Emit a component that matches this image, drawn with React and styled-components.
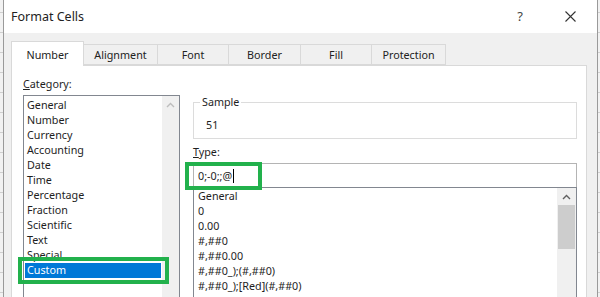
import React from 'react';
import styled, { createGlobalStyle } from 'styled-components';

const GlobalStyle = createGlobalStyle`
  html, body {
    margin: 0;
    padding: 0;
  }
  body {
    font-family: "Noto Sans", "Open Sans", sans-serif;
    color: #1e1e1e;
  }
`;

const Sheet = styled.div`
  width: 600px;
  height: 297px;
  overflow: hidden;
  display: flex;
  background-color: #f2f2f2;
  background-image: repeating-linear-gradient(
    to bottom,
    transparent 0,
    transparent 12px,
    #cfcfcf 12px,
    #cfcfcf 13px,
    transparent 13px,
    transparent 20px
  );
`;

const Dialog = styled.div`
  margin-left: 3px;
  width: 595px;
  height: 360px;
  flex: none;
  box-sizing: border-box;
  border-left: 1px solid #9a9a9a;
  border-right: 1px solid #9a9a9a;
  display: flex;
  flex-direction: column;
  background: #f0f0f0;
`;

const TitleBar = styled.div`
  height: 33px;
  flex: none;
  background: #fff;
  display: flex;
  align-items: center;
  padding: 0 21px 0 7px;
`;

const Title = styled.div`
  font-size: 12.5px;
  color: #222;
`;

const Controls = styled.div`
  margin-left: auto;
  display: flex;
  align-items: center;
  gap: 42px;
`;

const Help = styled.span`
  font-size: 13px;
  color: #444;
  line-height: 1;
`;

const Body = styled.div`
  flex: 1;
  display: flex;
  flex-direction: column;
  padding: 8px 10px 0 7px;
`;

const TabRow = styled.div`
  display: flex;
  align-items: flex-end;
  height: 24px;
  flex: none;
`;

const Tab = styled.div`
  position: relative;
  box-sizing: border-box;
  width: ${p => p.$w}px;
  height: ${p => (p.$active ? 25 : 21)}px;
  margin-right: -1px;
  margin-bottom: ${p => (p.$active ? -1 : 0)}px;
  padding-top: ${p => (p.$active ? 3 : 0)}px;
  border: 1px solid #d9d9d9;
  border-bottom: ${p => (p.$active ? 'none' : '1px solid #d9d9d9')};
  background: ${p => (p.$active ? '#fff' : '#f0f0f0')};
  z-index: ${p => (p.$active ? 2 : 1)};
  font-size: 10.75px;
  line-height: 20px;
  text-align: center;
  color: #222;
`;

const Panel = styled.div`
  flex: 1;
  display: flex;
  gap: 13px;
  background: #fff;
  border: 1px solid #d9d9d9;
  padding: 11px 9px 0 11px;
`;

const LeftCol = styled.div`
  width: 157px;
  flex: none;
  display: flex;
  flex-direction: column;
`;

const RightCol = styled.div`
  flex: 1;
  display: flex;
  flex-direction: column;
  padding-top: 18px;
`;

const Label = styled.div`
  font-size: 10.75px;
  line-height: 15px;
  height: 15px;
  margin: ${p => p.$mt || 0}px 0 3px;
`;

const ListBox = styled.div`
  display: flex;
  box-sizing: border-box;
  height: ${p => p.$h}px;
  border: 1px solid #828790;
  background: #fff;
`;

const Items = styled.div`
  flex: 1;
  padding: ${p => p.$pt}px 1px 0 1px;
`;

const Item = styled.div`
  position: relative;
  font-size: 10.75px;
  line-height: 15px;
  height: 15px;
  padding-left: ${p => p.$pl}px;
  white-space: nowrap;
  background: ${p => (p.$selected ? '#0078d7' : 'transparent')};
  color: ${p => (p.$selected ? '#fff' : '#1e1e1e')};
`;

const Mark = styled.div`
  position: absolute;
  box-sizing: border-box;
  border: 4px solid #22b14c;
  left: ${p => p.$l}px;
  top: ${p => p.$t}px;
  width: ${p => p.$w}px;
  height: ${p => p.$h}px;
  pointer-events: none;
  z-index: 3;
`;

const ScrollBar = styled.div`
  width: ${p => p.$w}px;
  flex: none;
  background: #f0f0f0;
  display: flex;
  flex-direction: column;
  align-items: center;
`;

const ArrowCell = styled.div`
  height: 17px;
  width: 100%;
  display: flex;
  align-items: center;
  justify-content: center;
`;

const Thumb = styled.div`
  width: calc(100% - 2px);
  height: 44px;
  background: #cdcdcd;
`;

const Group = styled.fieldset`
  margin: 0;
  min-width: 0;
  border: 1px solid #dcdcdc;
  padding: 0 0 5px 6px;
`;

const Legend = styled.legend`
  padding: 0 2px;
  font-size: 10.75px;
  line-height: 15px;
`;

const SampleValue = styled.div`
  margin-top: 8px;
  padding-left: 6px;
  font-size: 10.75px;
  line-height: 15px;
`;

const TypeInput = styled.div`
  position: relative;
  box-sizing: border-box;
  height: 24px;
  border: 1px solid #b4b4b4;
  border-bottom: none;
  padding-left: 4px;
  font-size: 10.75px;
  line-height: 22px;
  display: flex;
  align-items: center;
`;

const Caret = styled.span`
  display: inline-block;
  width: 1px;
  height: 14px;
  margin-left: 1px;
  background: #000;
`;

function Chevron({ color }) {
  return (
    <svg width="9" height="6" viewBox="0 0 9 6">
      <path d="M1 5 L4.5 1.5 L8 5" fill="none" stroke={color} strokeWidth="1.4" />
    </svg>
  );
}

const categories = [
  'General', 'Number', 'Currency', 'Accounting', 'Date', 'Time',
  'Percentage', 'Fraction', 'Scientific', 'Text', 'Special', 'Custom',
];

const formats = [
  'General', '0', '0.00', '#,##0', '#,##0.00',
  '#,##0_);(#,##0)', '#,##0_);[Red](#,##0)',
];

const tabs = [
  { name: 'Number', w: 73 },
  { name: 'Alignment', w: 75 },
  { name: 'Font', w: 72 },
  { name: 'Border', w: 73 },
  { name: 'Fill', w: 72 },
  { name: 'Protection', w: 75 },
];

export default function App() {
  return (
    <>
      <GlobalStyle />
      <Sheet>
        <Dialog>
          <TitleBar>
            <Title>Format Cells</Title>
            <Controls>
              <Help>?</Help>
              <svg width="11" height="11" viewBox="0 0 11 11">
                <path d="M0.5 0.5 L10.5 10.5 M10.5 0.5 L0.5 10.5" stroke="#333" strokeWidth="1.1" />
              </svg>
            </Controls>
          </TitleBar>
          <Body>
            <TabRow>
              {tabs.map((t, i) => (
                <Tab key={t.name} $w={t.w} $active={i === 0}>{t.name}</Tab>
              ))}
            </TabRow>
            <Panel>
              <LeftCol>
                <Label><u>C</u>ategory:</Label>
                <ListBox $h={220}>
                  <Items $pt={2}>
                    {categories.map(c => (
                      <Item key={c} $pl={2} $selected={c === 'Custom'}>
                        {c}
                        {c === 'Custom' && <Mark $l={-7} $t={-6} $w={151} $h={27} />}
                      </Item>
                    ))}
                  </Items>
                  <ScrollBar $w={17}>
                    <ArrowCell><Chevron color="#bdbdbd" /></ArrowCell>
                  </ScrollBar>
                </ListBox>
              </LeftCol>
              <RightCol>
                <Group>
                  <Legend>Sample</Legend>
                  <SampleValue>51</SampleValue>
                </Group>
                <Label $mt={6}><u>T</u>ype:</Label>
                <TypeInput>
                  0;-0;;@<Caret />
                  <Mark $l={-9} $t={-2} $w={77} $h={28} />
                </TypeInput>
                <ListBox $h={140}>
                  <Items $pt={1}>
                    {formats.map(f => (
                      <Item key={f} $pl={3}>{f}</Item>
                    ))}
                  </Items>
                  <ScrollBar $w={19}>
                    <ArrowCell><Chevron color="#606060" /></ArrowCell>
                    <Thumb />
                  </ScrollBar>
                </ListBox>
              </RightCol>
            </Panel>
          </Body>
        </Dialog>
      </Sheet>
    </>
  );
}
